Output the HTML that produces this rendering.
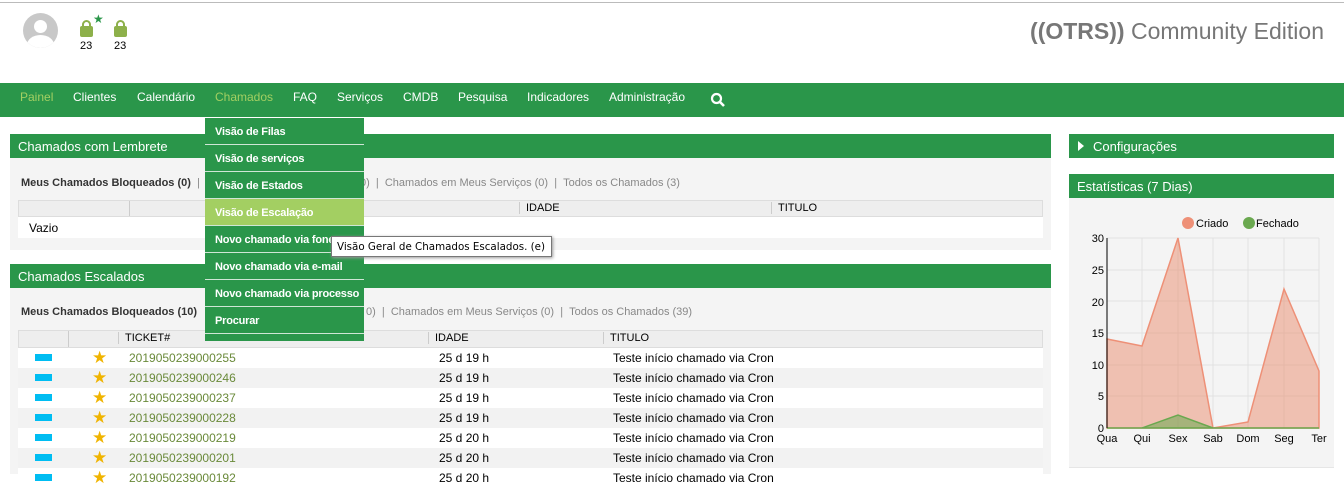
<!DOCTYPE html>
<html><head><meta charset="utf-8"><style>
*{margin:0;padding:0;box-sizing:border-box}
body{width:1344px;height:474px;overflow:hidden;background:#fff;font-family:"Liberation Sans",Arial,sans-serif;position:relative;font-size:12px;color:#000}
.a{position:absolute}
.nav span{position:absolute;top:7px;color:#fff;font-size:12px}
.hd{background:#2a964a;color:#fff;font-size:13px;padding:5px 8px;height:24px}
.bd{background:#f4f4f4}
.dd div{height:27px;border-bottom:1px solid #cfe6d5;color:#fff;font-weight:bold;font-size:11px;padding:8px 10px 0;white-space:nowrap;letter-spacing:-0.2px}
.tabs{font-size:11px;color:#888}
.tabs b{color:#333}
.row{position:absolute;left:18px;width:1025px;height:20px;font-size:12px}
.row span{position:absolute;top:3px}
</style></head><body>
<div class="a" style="left:0;top:2px;width:1344px;height:1px;background:#bbb"></div>
<div class="a" style="left:23px;top:13px;width:35px;height:35px;border-radius:50%;background:#c8c8c8;overflow:hidden"><div class="a" style="left:11px;top:7px;width:13px;height:13px;border-radius:50%;background:#fff"></div><div class="a" style="left:4px;top:22px;width:27px;height:20px;border-radius:50%;background:#fff"></div></div>
<div class="a" style="left:80px;top:26px;width:13px;height:11px;background:#8db04a;border-radius:2px"></div><div class="a" style="left:82px;top:20px;width:9px;height:10px;border:2px solid #8db04a;border-radius:5px 5px 0 0"></div>
<div class="a" style="left:93px;top:12px;color:#2a964a;font-size:12px">★</div>
<div class="a" style="left:114px;top:26px;width:13px;height:11px;background:#8db04a;border-radius:2px"></div><div class="a" style="left:116px;top:20px;width:9px;height:10px;border:2px solid #8db04a;border-radius:5px 5px 0 0"></div>
<div class="a" style="left:80px;top:40px;font-size:11px">23</div><div class="a" style="left:114px;top:40px;font-size:11px">23</div>
<div class="a" style="right:20px;top:18px;font-size:23px;color:#777;white-space:nowrap"><b>((OTRS))</b> Community Edition</div>
<div class="a nav" style="left:0;top:83px;width:1344px;height:34px;background:#2a964a">
<span style="left:20px;color:#a3cf62">Painel</span><span style="left:73px">Clientes</span><span style="left:137px">Calendário</span><span style="left:215px;color:#a3cf62">Chamados</span><span style="left:293px">FAQ</span><span style="left:337px">Serviços</span><span style="left:403px">CMDB</span><span style="left:458px">Pesquisa</span><span style="left:527px">Indicadores</span><span style="left:609px">Administração</span>
<svg class="a" style="left:710px;top:9px" width="16" height="16"><circle cx="6.5" cy="6.5" r="4.5" stroke="#fff" stroke-width="2.2" fill="none"/><line x1="10" y1="10" x2="14" y2="14" stroke="#fff" stroke-width="2.6"/></svg></div>

<div class="a hd" style="left:10px;top:134px;width:1041px">Chamados com Lembrete</div>
<div class="a bd" style="left:10px;top:158px;width:1041px;height:92px"></div>
<div class="a tabs" style="left:21px;top:177px"><b>Meus Chamados Bloqueados (0)</b> &nbsp;|</div>
<div class="a tabs" style="left:360px;top:177px">0) &nbsp;| &nbsp;Chamados em Meus Serviços (0) &nbsp;| &nbsp;Todos os Chamados (3)</div>
<div class="a" style="left:18px;top:200px;width:1025px;height:17px;background:#eee;border:1px solid #ddd;font-size:11px"><span class="a" style="left:110px;top:0;height:15px;border-left:1px solid #ccc"></span><span class="a" style="left:500px;top:1px;border-left:1px solid #ccc;padding-left:6px">IDADE</span><span class="a" style="left:752px;top:1px;border-left:1px solid #ccc;padding-left:6px">TITULO</span></div>
<div class="a" style="left:18px;top:217px;width:1025px;height:21px;background:#fff;padding:4px 11px">Vazio</div>

<div class="a hd" style="left:10px;top:264px;width:1041px">Chamados Escalados</div>
<div class="a bd" style="left:10px;top:288px;width:1041px;height:186px"></div>
<div class="a tabs" style="left:21px;top:306px"><b>Meus Chamados Bloqueados (10)</b></div>
<div class="a tabs" style="left:366px;top:306px">0) &nbsp;| &nbsp;Chamados em Meus Serviços (0) &nbsp;| &nbsp;Todos os Chamados (39)</div>
<div class="a" style="left:18px;top:330px;width:1025px;height:18px;background:#eee;border:1px solid #ddd;font-size:11px"><span class="a" style="left:49px;top:0;height:16px;border-left:1px solid #ccc"></span><span class="a" style="left:99px;top:1px;border-left:1px solid #ccc;padding-left:6px">TICKET#</span><span class="a" style="left:409px;top:1px;border-left:1px solid #ccc;padding-left:6px">IDADE</span><span class="a" style="left:584px;top:1px;border-left:1px solid #ccc;padding-left:6px">TITULO</span></div>
<div id="rows"></div>
<script>
var t=["255","246","237","228","219","201","192"],h="";
for(var i=0;i<7;i++){var y=348+i*20;h+='<div class="row" style="top:'+y+'px;background:'+(i%2?'#f2f2f2':'#fff')+'"><span style="left:17px;top:6px;width:17px;height:7px;background:#00bdf2"></span><span style="left:74px;top:0;color:#f0b400;font-size:17px">★</span><span style="left:111px;color:#6a8a3a">2019050239000'+t[i]+'</span><span style="left:421px">25 d '+(i<4?'19':'20')+' h</span><span style="left:595px">Teste início chamado via Cron</span></div>';}
document.getElementById('rows').innerHTML=h;
</script>

<div class="a dd" style="left:205px;top:118px;width:159px;height:223px;background:#2a964a">
<div>Visão de Filas</div><div>Visão de serviços</div><div>Visão de Estados</div><div style="background:#a3cf62">Visão de Escalação</div><div>Novo chamado via fone</div><div>Novo chamado via e-mail</div><div>Novo chamado via processo</div><div>Procurar</div></div>
<div class="a" style="left:331px;top:236px;width:221px;height:21px;background:#fff;border:1px solid #777;box-shadow:1px 1px 3px #999;font-family:'DejaVu Sans',sans-serif;font-size:10.3px;padding:4px 5px;white-space:nowrap">Visão Geral de Chamados Escalados. (e)</div>

<div class="a hd" style="left:1069px;top:134px;width:265px;padding-left:24px">Configurações</div>
<div class="a" style="left:1078px;top:141px;width:0;height:0;border-left:6px solid #fff;border-top:5px solid transparent;border-bottom:5px solid transparent"></div>
<div class="a hd" style="left:1069px;top:174px;width:265px">Estatísticas (7 Dias)</div>
<div class="a bd" style="left:1069px;top:198px;width:265px;height:270px;border-bottom:1px solid #e6e6e6"></div>
<svg class="a" style="left:1069px;top:198px" width="275" height="276" font-family="Liberation Sans,sans-serif" font-size="11">
<g transform="translate(-1069,-198)">
<circle cx="1188" cy="223" r="6" fill="#ee9077"/><text x="1196" y="227">Criado</text>
<circle cx="1249" cy="223" r="6" fill="#6aa84f"/><text x="1256" y="227">Fechado</text>
<g stroke="#e2e2e2"><line x1="1107" y1="238" x2="1319" y2="238"/><line x1="1107" y1="270" x2="1319" y2="270"/><line x1="1107" y1="301" x2="1319" y2="301"/><line x1="1107" y1="333" x2="1319" y2="333"/><line x1="1107" y1="365" x2="1319" y2="365"/><line x1="1107" y1="396" x2="1319" y2="396"/>
<line x1="1142" y1="238" x2="1142" y2="428"/><line x1="1178" y1="238" x2="1178" y2="428"/><line x1="1213" y1="238" x2="1213" y2="428"/><line x1="1248" y1="238" x2="1248" y2="428"/><line x1="1284" y1="238" x2="1284" y2="428"/><line x1="1319" y1="238" x2="1319" y2="428"/></g>
<polygon points="1107,339 1142,346 1178,238 1213,428 1248,422 1284,289 1319,371 1319,428 1107,428" fill="rgba(234,140,110,0.5)" stroke="#ee9077" stroke-width="1.5"/>
<polygon points="1107,428 1142,428 1178,415 1213,428 1319,428" fill="rgba(106,168,79,0.55)" stroke="#6aa84f" stroke-width="1.5"/>
<line x1="1107" y1="238" x2="1107" y2="428" stroke="#000"/>
<g text-anchor="end"><text x="1104" y="242">30</text><text x="1104" y="306">20</text><text x="1104" y="274">25</text><text x="1104" y="337">15</text><text x="1104" y="369">10</text><text x="1104" y="400">5</text><text x="1104" y="432">0</text></g>
<g text-anchor="middle"><text x="1107" y="442">Qua</text><text x="1142" y="442">Qui</text><text x="1178" y="442">Sex</text><text x="1213" y="442">Sab</text><text x="1248" y="442">Dom</text><text x="1284" y="442">Seg</text><text x="1319" y="442">Ter</text></g>
</g></svg>
</body></html>
